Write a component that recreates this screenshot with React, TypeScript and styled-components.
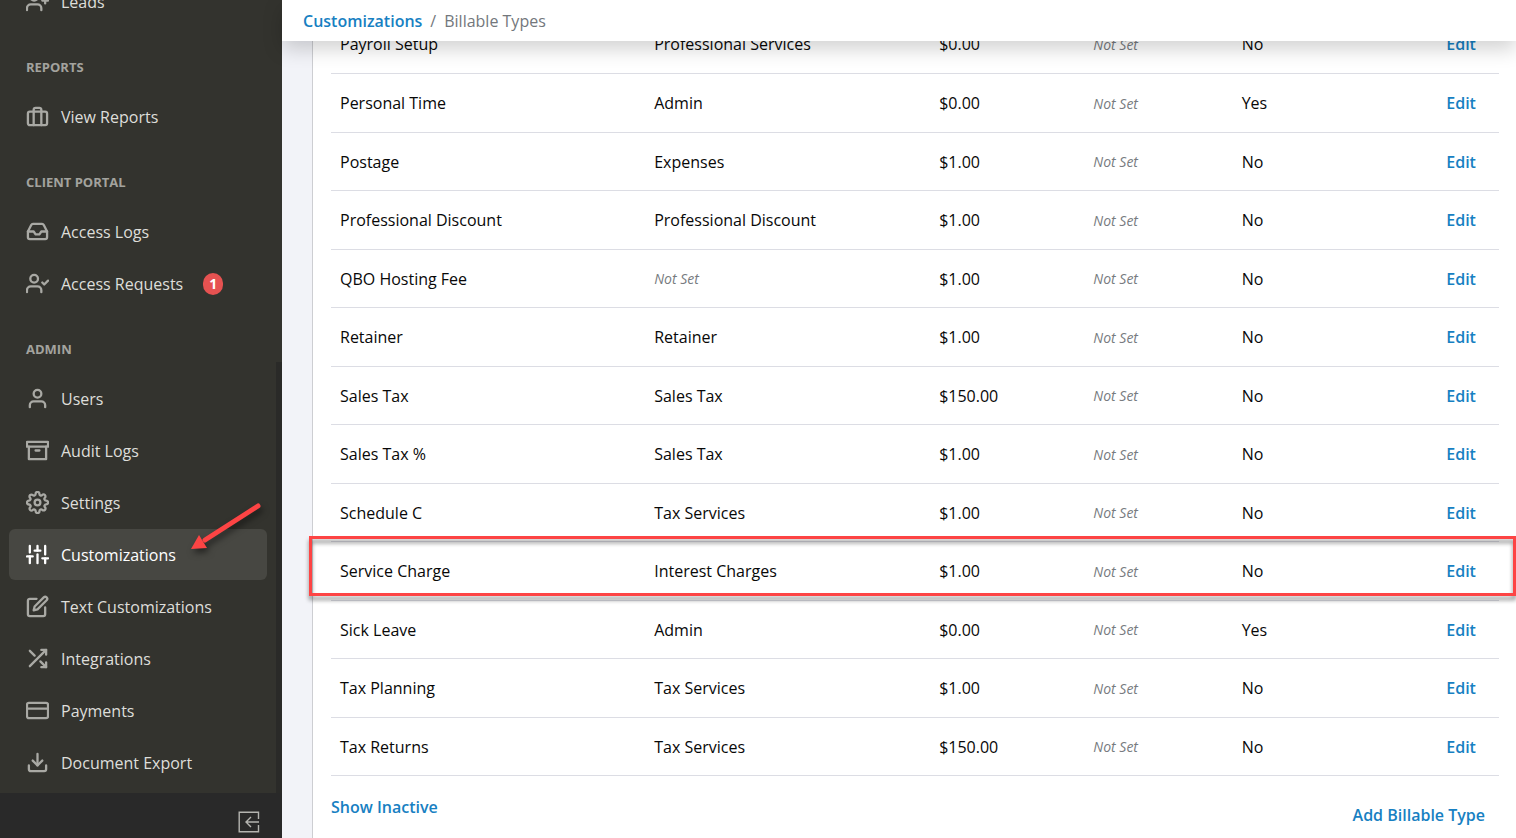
import React from "react";
import styled, { createGlobalStyle, css } from "styled-components";
import {
  FiArchive,
  FiBriefcase,
  FiCreditCard,
  FiDownload,
  FiEdit,
  FiInbox,
  FiSettings,
  FiShuffle,
  FiSliders,
  FiUser,
  FiUserCheck,
  FiUserPlus,
} from "react-icons/fi";
import type { IconType } from "react-icons";

const GlobalStyle = createGlobalStyle`
  *, *::before, *::after { box-sizing: border-box; }
  body {
    margin: 0;
    background: #f2f3f8;
    color: #080808;
    font-family: "Open Sans", "Noto Sans", sans-serif;
    font-size: 16px;
    line-height: 24px;
  }
`;

const Page = styled.div`
  display: flex;
  min-height: 100vh;
`;

const Sidebar = styled.aside`
  position: sticky;
  top: 0;
  display: flex;
  flex-direction: column;
  flex: none;
  width: 282px;
  height: 100vh;
  background: #33332e;
`;

const Nav = styled.nav`
  position: relative;
  display: flex;
  flex: 1;
  flex-direction: column;
  justify-content: flex-end;
  min-height: 0;
  padding: 0 15px 4px 9px;
  overflow: hidden;
`;

const ScrollThumb = styled.div`
  position: absolute;
  right: 0;
  bottom: 0;
  width: 6px;
  height: 431px;
  background: #2a2a28;
`;

const SectionTitle = styled.h2`
  flex: none;
  margin: 0;
  padding: 29px 17px 14px;
  color: #a3a39e;
  font-size: 13px;
  font-weight: 700;
  line-height: 20px;
  text-transform: uppercase;
`;

const NavLink = styled.a<{ $active?: boolean }>`
  position: relative;
  display: flex;
  flex: none;
  align-items: center;
  gap: 12px;
  height: 51px;
  margin-bottom: 1px;
  padding: 0 17px;
  border-radius: 6px;
  color: #dededa;
  text-decoration: none;

  > svg:first-child {
    flex: none;
    color: #a9a9a4;
    stroke-width: 2.4;
  }

  ${({ $active }) =>
    $active &&
    css`
      background: #474742;
      color: #fff;

      > svg:first-child {
        color: #fff;
      }
    `}
`;

const Badge = styled.span`
  width: 20px;
  margin-left: 8px;
  border-radius: 10px;
  background: #e65251;
  color: #fff;
  font-size: 14px;
  font-weight: 700;
  line-height: 22px;
  text-align: center;
`;

const Pointer = styled.svg`
  position: absolute;
  top: -32px;
  right: 0;
  filter: drop-shadow(2px 4px 3px rgba(0, 0, 0, 0.5));
`;

const SidebarFooter = styled.div`
  display: flex;
  flex: none;
  justify-content: flex-end;
  height: 45px;
  padding: 18px 22px 0 0;
  background: #292929;
`;

const CollapseButton = styled.button`
  width: 22px;
  height: 22px;
  padding: 0;
  border: 0;
  background: none;
  color: #b4b4b0;
`;

const Main = styled.main`
  display: flex;
  flex: 1;
  flex-direction: column;
  min-width: 0;
`;

const TopBar = styled.header`
  position: sticky;
  top: 0;
  z-index: 1;
  display: flex;
  align-items: center;
  gap: 8px;
  height: 41px;
  padding: 0 21px;
  background: #fff;
  box-shadow: 0 8px 20px rgba(0, 0, 0, 0.18);
  color: #73777c;
`;

const linkStyle = css`
  color: #1780c2;
  font-weight: 600;
  text-decoration: none;
`;

const TextLink = styled.a`
  ${linkStyle}
`;

const TextButton = styled.button`
  ${linkStyle}
  padding: 0;
  border: 0;
  background: none;
  font-family: inherit;
  font-size: 16px;
  line-height: 24px;
`;

const Card = styled.section`
  flex: 1;
  margin: -26px 0 0 30px;
  padding: 0 17px 0 18px;
  border-left: 1px solid #cdced2;
  background: #fff;
`;

const Table = styled.table`
  width: 100%;
  border-collapse: separate;
  border-spacing: 0;
  table-layout: fixed;
`;

const Column = styled.col<{ $share: number }>`
  width: ${({ $share }) => $share}%;
`;

const Row = styled.tr<{ $marked?: boolean }>`
  position: relative;
  height: 59px;

  &:nth-child(odd) {
    height: 58px;
  }

  &:first-child {
    height: 59px;
  }

  ${({ $marked }) =>
    $marked &&
    css`
      &::after {
        content: "";
        position: absolute;
        inset: -6px -17px 5px -22px;
        border: 3px solid #fd4444;
        filter: drop-shadow(0 4px 2px rgba(0, 0, 0, 0.45));
        pointer-events: none;
      }
    `}
`;

const Cell = styled.td<{ $end?: boolean }>`
  padding: 0 ${({ $end }) => ($end ? 23 : 9)}px 0 9px;
  border-bottom: 1px solid #dcdde4;
  text-align: ${({ $end }) => ($end ? "right" : "left")};
  white-space: nowrap;
`;

const Unset = styled.em`
  color: #777b80;
  font-size: 14px;
`;

const CardFooter = styled.footer`
  display: flex;
  align-items: flex-start;
  justify-content: space-between;
  padding: 19px 14px 11px 0;
`;

const AddAction = styled.div`
  padding-top: 8px;
`;

type NavItem = { label: string; icon: IconType; badge?: number; active?: boolean };

const sections: { title?: string; items: NavItem[] }[] = [
  { items: [{ label: "Leads", icon: FiUserPlus }] },
  { title: "Reports", items: [{ label: "View Reports", icon: FiBriefcase }] },
  {
    title: "Client Portal",
    items: [
      { label: "Access Logs", icon: FiInbox },
      { label: "Access Requests", icon: FiUserCheck, badge: 1 },
    ],
  },
  {
    title: "Admin",
    items: [
      { label: "Users", icon: FiUser },
      { label: "Audit Logs", icon: FiArchive },
      { label: "Settings", icon: FiSettings },
      { label: "Customizations", icon: FiSliders, active: true },
      { label: "Text Customizations", icon: FiEdit },
      { label: "Integrations", icon: FiShuffle },
      { label: "Payments", icon: FiCreditCard },
      { label: "Document Export", icon: FiDownload },
    ],
  },
];

type Billable = { name: string; category?: string; rate: string; admin: string; marked?: boolean };

const billables: Billable[] = [
  { name: "Payroll Setup", category: "Professional Services", rate: "$0.00", admin: "No" },
  { name: "Personal Time", category: "Admin", rate: "$0.00", admin: "Yes" },
  { name: "Postage", category: "Expenses", rate: "$1.00", admin: "No" },
  { name: "Professional Discount", category: "Professional Discount", rate: "$1.00", admin: "No" },
  { name: "QBO Hosting Fee", rate: "$1.00", admin: "No" },
  { name: "Retainer", category: "Retainer", rate: "$1.00", admin: "No" },
  { name: "Sales Tax", category: "Sales Tax", rate: "$150.00", admin: "No" },
  { name: "Sales Tax %", category: "Sales Tax", rate: "$1.00", admin: "No" },
  { name: "Schedule C", category: "Tax Services", rate: "$1.00", admin: "No" },
  { name: "Service Charge", category: "Interest Charges", rate: "$1.00", admin: "No", marked: true },
  { name: "Sick Leave", category: "Admin", rate: "$0.00", admin: "Yes" },
  { name: "Tax Planning", category: "Tax Services", rate: "$1.00", admin: "No" },
  { name: "Tax Returns", category: "Tax Services", rate: "$150.00", admin: "No" },
];

const columnShares = [26.9, 24.4, 13.2, 12.7, 11.4, 11.4];

function PointerArrow() {
  return (
    <Pointer width="84" height="60" viewBox="0 0 84 60" aria-hidden="true">
      <path d="M75 9 L22 43" stroke="#fd4444" strokeWidth="5" strokeLinecap="round" />
      <path d="M8 52 L16 38 L24 51 Z" fill="#fd4444" />
    </Pointer>
  );
}

function CollapseIcon() {
  return (
    <svg width="22" height="22" viewBox="0 0 22 22" fill="none" stroke="currentColor" strokeWidth="1.4">
      <path d="M20.5 8V1.2H1.2v19.6h19.3V14" />
      <path d="M21 11H8M13 6l-5 5 5 5" />
    </svg>
  );
}

export default function App() {
  return (
    <>
      <GlobalStyle />
      <Page>
        <Sidebar>
          <Nav aria-label="Main">
            {sections.map((section, i) => (
              <React.Fragment key={i}>
                {section.title && <SectionTitle>{section.title}</SectionTitle>}
                {section.items.map(({ label, icon: Icon, badge, active }) => (
                  <NavLink key={label} href="#" $active={active} aria-current={active ? "page" : undefined}>
                    <Icon size={23} aria-hidden="true" />
                    {label}
                    {badge && <Badge>{badge}</Badge>}
                    {active && <PointerArrow />}
                  </NavLink>
                ))}
              </React.Fragment>
            ))}
            <ScrollThumb />
          </Nav>
          <SidebarFooter>
            <CollapseButton type="button" aria-label="Collapse sidebar">
              <CollapseIcon />
            </CollapseButton>
          </SidebarFooter>
        </Sidebar>
        <Main>
          <TopBar>
            <TextLink href="#">Customizations</TextLink>
            <span>/</span>
            <span>Billable Types</span>
          </TopBar>
          <Card>
            <Table>
              <colgroup>
                {columnShares.map((share, i) => (
                  <Column key={i} $share={share} />
                ))}
              </colgroup>
              <tbody>
                {billables.map((item) => (
                  <Row key={item.name} $marked={item.marked}>
                    <Cell>{item.name}</Cell>
                    <Cell>{item.category ?? <Unset>Not Set</Unset>}</Cell>
                    <Cell>{item.rate}</Cell>
                    <Cell>
                      <Unset>Not Set</Unset>
                    </Cell>
                    <Cell>{item.admin}</Cell>
                    <Cell $end>
                      <TextLink href="#">Edit</TextLink>
                    </Cell>
                  </Row>
                ))}
              </tbody>
            </Table>
            <CardFooter>
              <TextButton type="button">Show Inactive</TextButton>
              <AddAction>
                <TextButton type="button">Add Billable Type</TextButton>
              </AddAction>
            </CardFooter>
          </Card>
        </Main>
      </Page>
    </>
  );
}
